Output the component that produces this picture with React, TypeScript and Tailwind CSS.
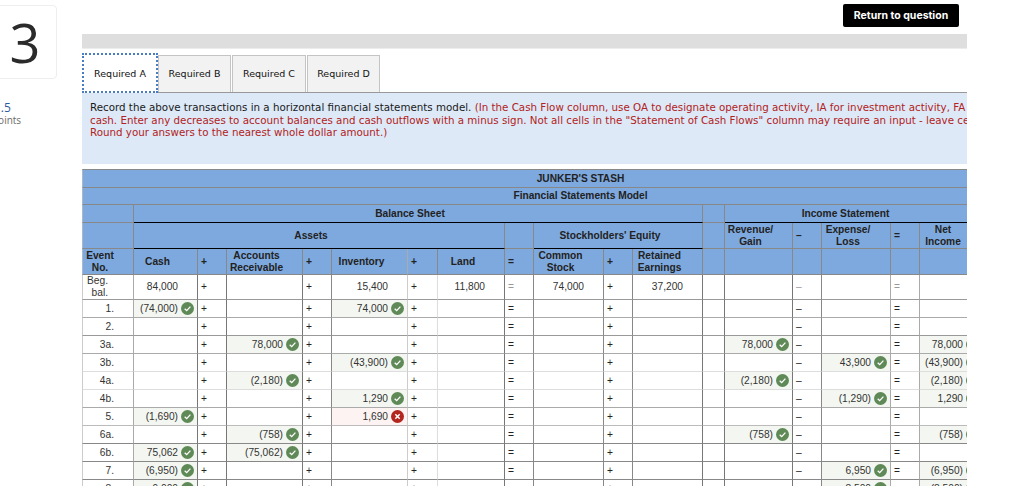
import React from "react";

type Mark = "ok" | "bad";
type Val = { v: string; m?: Mark };
type Row = {
  label: React.ReactNode;
  h: string;
  line: string;
  faint?: boolean;
  vals: Record<number, Val>;
};

const WIDTHS = [52, 64, 29, 76, 29, 76, 30, 67, 29, 70, 29, 70, 22, 68, 29, 69, 29, 63, 112];

const COL_BORDER = [
  "border-r-[#aaaaaa]",
  "border-r-[#777777]",
  "border-r-[#777777]",
  "border-r-[#777777]",
  "border-r-[#888888]",
  "border-r-[#cccccc]",
  "border-r-[#dddddd]",
  "border-r-[#777777]",
  "border-r-[#888888]",
  "border-r-[#888888]",
  "border-r-[#888888]",
  "border-r-[#777777]",
  "border-r-[#777777]",
  "border-r-[#777777]",
  "border-r-[#888888]",
  "border-r-[#aaaaaa]",
  "border-r-[#aaaaaa]",
  "border-r-[#aaaaaa]",
  "border-r-[#aaaaaa]",
];

const SIGNS: Record<number, string> = { 2: "+", 4: "+", 6: "+", 8: "=", 10: "+", 14: "–", 16: "=" };

const ok = (v: string): Val => ({ v, m: "ok" });

const ROWS: Row[] = [
  {
    label: (
      <span className="block pr-[6px] text-right leading-[12px]">
        Beg.
        <br />
        bal.
      </span>
    ),
    h: "h-[24px]",
    line: "border-b-[#999999]",
    faint: true,
    vals: { 1: { v: "84,000" }, 5: { v: "15,400" }, 7: { v: "11,800" }, 9: { v: "74,000" }, 11: { v: "37,200" } },
  },
  { label: "1.", h: "h-[18px]", line: "border-b-[#aaaaaa]", vals: { 1: ok("(74,000)"), 5: ok("74,000") } },
  { label: "2.", h: "h-[18px]", line: "border-b-[#999999]", vals: {} },
  { label: "3a.", h: "h-[18px]", line: "border-b-[#aaaaaa]", vals: { 3: ok("78,000"), 13: ok("78,000"), 17: ok("78,000") } },
  { label: "3b.", h: "h-[18px]", line: "border-b-[#dddddd]", vals: { 5: ok("(43,900)"), 15: ok("43,900"), 17: ok("(43,900)") } },
  { label: "4a.", h: "h-[18px]", line: "border-b-[#dddddd]", vals: { 3: ok("(2,180)"), 13: ok("(2,180)"), 17: ok("(2,180)") } },
  { label: "4b.", h: "h-[18px]", line: "border-b-[#aaaaaa]", vals: { 5: ok("1,290"), 15: ok("(1,290)"), 17: ok("1,290") } },
  { label: "5.", h: "h-[18px]", line: "border-b-[#bbbbbb]", vals: { 1: ok("(1,690)"), 5: { v: "1,690", m: "bad" } } },
  { label: "6a.", h: "h-[18px]", line: "border-b-[#888888]", vals: { 3: ok("(758)"), 13: ok("(758)"), 17: ok("(758)") } },
  { label: "6b.", h: "h-[18px]", line: "border-b-[#888888]", vals: { 1: ok("75,062"), 3: ok("(75,062)") } },
  { label: "7.", h: "h-[18px]", line: "border-b-[#888888]", vals: { 1: ok("(6,950)"), 15: ok("6,950"), 17: ok("(6,950)") } },
  { label: "8.", h: "h-[18px]", line: "border-b-[#888888]", vals: { 1: ok("9,000"), 15: ok("8,500"), 17: ok("(8,500)") } },
];

function Badge({ m }: { m: Mark }) {
  if (m === "ok") {
    return (
      <svg viewBox="0 0 13 13" className="ml-[3px] h-[13px] w-[13px] shrink-0">
        <circle cx="6.5" cy="6.5" r="6.5" fill="#5f8a57" />
        <path d="M3.7 6.7 5.7 8.6 9.4 4.6" fill="none" stroke="#ffffff" strokeWidth="1.3" />
      </svg>
    );
  }
  return (
    <svg viewBox="0 0 13 13" className="ml-[3px] h-[13px] w-[13px] shrink-0">
      <circle cx="6.5" cy="6.5" r="6.5" fill="#b3261e" />
      <path d="M4.3 4.3 8.7 8.7M8.7 4.3 4.3 8.7" fill="none" stroke="#ffffff" strokeWidth="1.5" />
    </svg>
  );
}

function Th({
  children,
  span,
  line = "border-b-[#888888]",
  right = "border-r-[#888888]",
  top,
  left,
  h,
}: {
  children?: React.ReactNode;
  span?: number;
  line?: string;
  right?: string;
  top?: boolean;
  left?: boolean;
  h?: string;
}) {
  return (
    <th
      colSpan={span}
      className={`border-b border-r p-0 pr-[16px] text-center align-middle text-[10.2px] font-bold leading-[12px] text-[#222222] ${line} ${right} ${
        top ? "border-t border-t-[#888888]" : ""
      } ${left ? "border-l border-l-[#aab8cc]" : ""} ${h ?? ""}`}
    >
      {children}
    </th>
  );
}

function SignTh({ children }: { children: React.ReactNode }) {
  return (
    <th className="border-b border-r border-b-[#888888] border-r-[#888888] p-0 pl-[3px] text-left align-middle text-[10.2px] font-bold text-[#222222]">
      {children}
    </th>
  );
}

function BodyRow({ row }: { row: Row }) {
  return (
    <tr className={row.h}>
      {WIDTHS.map((_, i) => {
        const base = `border-b border-r p-0 align-middle ${row.line} ${COL_BORDER[i]}`;
        if (i === 0) {
          return (
            <td key={i} className={`${base} border-l border-l-[#cccccc] pr-[19px] text-right`}>
              {row.label}
            </td>
          );
        }
        const sign = SIGNS[i];
        if (sign) {
          const tone = row.faint && (sign === "–" || sign === "=") ? "text-[#999999]" : "text-[#222222]";
          return (
            <td key={i} className={`${base} pl-[3px] text-left ${tone}`}>
              {sign}
            </td>
          );
        }
        const val = row.vals[i];
        if (!val) return <td key={i} className={base} />;
        const bg = val.m === "ok" ? "bg-[#f4f7f1]" : val.m === "bad" ? "bg-[#fdf3f2]" : "";
        return (
          <td key={i} className={`${base} ${bg}`}>
            <div className="flex items-center justify-end pr-[3px]">
              <span>{val.v}</span>
              {val.m ? <Badge m={val.m} /> : <span className="ml-[3px] w-[13px]" />}
            </div>
          </td>
        );
      })}
    </tr>
  );
}

function Tab({ children, active, w }: { children: React.ReactNode; active?: boolean; w: string }) {
  return (
    <div
      className={`flex items-center justify-center text-[9.5px] text-[#111111] ${w} ${
        active
          ? "relative z-10 -mb-[1px] h-[40px] border-2 border-dotted border-[#4a7cc0] bg-white pt-[3px]"
          : "h-[37px] border border-b-0 border-[#c4c4c4] bg-[#f2f2f2] pt-[1px]"
      }`}
    >
      {children}
    </div>
  );
}

export default function App() {
  return (
    <div className="flex h-[486px] w-[1024px] overflow-hidden bg-white font-['Liberation_Sans',Arial,sans-serif]">
      <div className="w-[82px] shrink-0 overflow-hidden pt-[5px]">
        <div className="-ml-[7px] flex h-[74px] w-[64px] items-center justify-center rounded-[4px] border border-[#eeeeee] font-['Open_Sans',sans-serif] text-[54px] leading-none text-[#2b2b2b]">
          3
        </div>
        <div className="mt-[22px] font-['Open_Sans',sans-serif] leading-[13px]">
          <div className="-ml-[6px] text-[12px] font-medium text-[#2f5d9b]">1.5</div>
          <div className="-ml-[8px] text-[10px] text-[#6b6b6b]">points</div>
        </div>
      </div>

      <div className="w-[885px] shrink-0 overflow-hidden">
        <div className="flex justify-end pr-[8px] pt-[4px]">
          <div className="flex h-[23px] w-[116px] items-center justify-center rounded-[2px] bg-black font-['Inter',sans-serif] text-[10.5px] font-bold text-white">
            Return to question
          </div>
        </div>
        <div className="mt-[7px] h-[15px] border-b border-b-[#ececec] bg-[#dedede]" />

        <div className="mt-[6px] flex h-[37px] items-end font-['DejaVu_Sans',Verdana,sans-serif]">
          <Tab active w="w-[76px]">Required A</Tab>
          <Tab w="w-[73px]">Required B</Tab>
          <div className="w-[1px]" />
          <Tab w="w-[74px]">Required C</Tab>
          <div className="w-[1px]" />
          <Tab w="w-[73px]">Required D</Tab>
        </div>

        <div className="h-[72px] overflow-hidden border-t border-t-[#999999] bg-[#dde9f7] pl-[8px] pt-[8px] font-['DejaVu_Sans',Verdana,sans-serif] text-[10.3px] leading-[12.5px] text-[#b22222]">
          <div className="whitespace-nowrap">
            <span className="text-[#1a1a1a]">Record the above transactions in a horizontal financial statements model.</span>{" "}
            (In the Cash Flow column, use OA to designate operating activity, IA for investment activity, FA for financing activity.)
          </div>
          <div className="whitespace-nowrap">
            cash. Enter any decreases to account balances and cash outflows with a minus sign. Not all cells in the "Statement of Cash Flows" column may require an input - leave cells blank.
          </div>
          <div className="whitespace-nowrap">Round your answers to the nearest whole dollar amount.)</div>
        </div>

        <div className="mt-[5px] w-[885px] overflow-hidden">
          <table className="w-[1013px] table-fixed border-separate border-spacing-0 text-[10.2px] leading-[12px] text-[#333333]">
            <colgroup>
              {WIDTHS.map((w, i) => (
                <col key={i} style={{ width: w }} />
              ))}
            </colgroup>
            <thead className="bg-[#7ea9de]">
              <tr className="h-[19px]">
                <Th span={19} top left>JUNKER'S STASH</Th>
              </tr>
              <tr className="h-[17px]">
                <Th span={19} left>Financial Statements Model</Th>
              </tr>
              <tr className="h-[18px]">
                <Th left />
                <Th span={11} line="border-b-black">Balance Sheet</Th>
                <Th />
                <Th span={5} line="border-b-black">Income Statement</Th>
                <Th />
              </tr>
              <tr className="h-[26px]">
                <Th left />
                <Th span={7} line="border-b-black">Assets</Th>
                <Th />
                <Th span={3} line="border-b-black">Stockholders' Equity</Th>
                <Th />
                <Th>Revenue/<br />Gain</Th>
                <SignTh>–</SignTh>
                <Th>Expense/<br />Loss</Th>
                <SignTh>=</SignTh>
                <Th>Net<br />Income</Th>
                <Th />
              </tr>
              <tr className="h-[26px]">
                <Th left>Event<br />No.</Th>
                <Th>Cash</Th>
                <SignTh>+</SignTh>
                <Th>Accounts<br />Receivable</Th>
                <SignTh>+</SignTh>
                <Th right="border-r-[#aaaaaa]">Inventory</Th>
                <SignTh>+</SignTh>
                <Th>Land</Th>
                <SignTh>=</SignTh>
                <Th>Common<br />Stock</Th>
                <SignTh>+</SignTh>
                <Th>Retained<br />Earnings</Th>
                <Th />
                <Th />
                <Th />
                <Th />
                <Th />
                <Th />
                <Th />
              </tr>
            </thead>
            <tbody className="bg-white">
              {ROWS.map((r, i) => (
                <BodyRow key={i} row={r} />
              ))}
            </tbody>
          </table>
        </div>
      </div>
    </div>
  );
}
